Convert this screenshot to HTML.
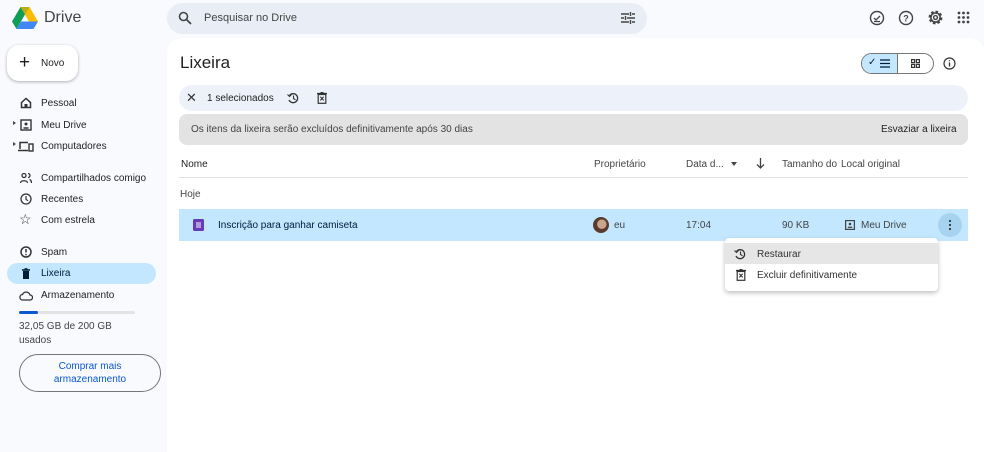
<!DOCTYPE html>
<html><head><meta charset="utf-8"><style>
*{box-sizing:border-box;margin:0;padding:0}
body{width:984px;height:452px;background:#f8fafd;font-family:"Liberation Sans",sans-serif;color:#1f1f1f;position:relative;overflow:hidden;font-size:10px}
.a{position:absolute}
.nav{position:absolute;left:41px;font-size:10px;color:#1f1f1f}
.ic{position:absolute;left:20px;width:12px;height:12px}
</style></head><body>
<!-- logo -->
<svg class="a" style="left:12px;top:7px" width="26" height="22" viewBox="0 0 26 22">
<path d="M8.5 0h9l8.5 14.5h-9z" fill="#fbbc04"/>
<path d="M8.5 0L0 14.5l4.5 7.5 8.5-14.5z" fill="#0f9d58"/>
<path d="M4.5 22h17l4.5-7.5H9z" fill="#4285f4"/>
<path d="M8.5 0l4.5 7.5L17.5 0z" fill="#1e8e3e" opacity=".3"/>
</svg>
<div class="a" style="left:44px;top:9px;font-size:16px;color:#444">Drive</div>
<!-- search -->
<div class="a" style="left:167px;top:3px;width:480px;height:31px;border-radius:16px;background:#e9eef6"></div>
<svg class="a" style="left:178px;top:11px" width="14" height="14" viewBox="0 0 14 14"><circle cx="5.5" cy="5.5" r="4" fill="none" stroke="#444" stroke-width="1.6"/><path d="M8.5 8.5L13 13" stroke="#444" stroke-width="1.8"/></svg>
<div class="a" style="left:204px;top:12px;font-size:11px;color:#444">Pesquisar no Drive</div>
<svg class="a" style="left:621px;top:12px" width="14" height="12" viewBox="0 0 14 12"><path d="M0 2h8M11 2h3M0 6h3M6 6h8M0 10h8M11 10h3M9.5 0v4M4.5 4v4M9.5 8v4" stroke="#444" stroke-width="1.4"/></svg>
<!-- top right icons -->
<svg class="a" style="left:869px;top:10px" width="16" height="16" viewBox="0 0 16 16"><circle cx="8" cy="8" r="6.5" fill="none" stroke="#444" stroke-width="1.4"/><path d="M5 8l2 2 4-4M5 11.5h6" stroke="#444" stroke-width="1.3" fill="none"/></svg>
<svg class="a" style="left:898px;top:10px" width="16" height="16" viewBox="0 0 16 16"><circle cx="8" cy="8" r="6.5" fill="none" stroke="#444" stroke-width="1.4"/><text x="8" y="11.5" font-size="9" text-anchor="middle" fill="#444" font-family="Liberation Sans" font-weight="bold">?</text></svg>
<svg class="a" style="left:927px;top:9px" width="17" height="17" viewBox="0 0 16 16"><circle cx="8" cy="8" r="5" fill="none" stroke="#444" stroke-width="3" stroke-dasharray="2.2 1.7"/><circle cx="8" cy="8" r="4.4" fill="none" stroke="#444" stroke-width="1.4"/><circle cx="8" cy="8" r="1.8" fill="none" stroke="#444" stroke-width="1.3"/></svg>
<svg class="a" style="left:957px;top:11px" width="13" height="13" viewBox="0 0 13 13" fill="#444"><circle cx="2" cy="2" r="1.4"/><circle cx="6.5" cy="2" r="1.4"/><circle cx="11" cy="2" r="1.4"/><circle cx="2" cy="6.5" r="1.4"/><circle cx="6.5" cy="6.5" r="1.4"/><circle cx="11" cy="6.5" r="1.4"/><circle cx="2" cy="11" r="1.4"/><circle cx="6.5" cy="11" r="1.4"/><circle cx="11" cy="11" r="1.4"/></svg>
<!-- Novo -->
<div class="a" style="left:7px;top:45px;width:71px;height:36px;background:#fff;border-radius:12px;box-shadow:0 1px 3px rgba(0,0,0,.3)"></div>
<div class="a" style="left:19px;top:53px;font-size:19px;font-weight:300;color:#1f1f1f;line-height:19px">+</div>
<div class="a" style="left:41px;top:58px;font-size:10px">Novo</div>
<!-- nav -->
<svg class="ic" style="top:97px" viewBox="0 0 12 12"><path d="M1.5 5.5L6 1.5l4.5 4v5h-9z" fill="none" stroke="#333" stroke-width="1.5"/><rect x="4.5" y="7" width="3" height="3.5" fill="#333"/></svg>
<div class="nav" style="top:98px">Pessoal</div>
<div class="a" style="left:13px;top:121px;border-left:3px solid #444;border-top:2.5px solid transparent;border-bottom:2.5px solid transparent"></div>
<svg class="ic" style="top:119px" viewBox="0 0 12 12"><rect x="1" y="1" width="10" height="10" fill="none" stroke="#333" stroke-width="1.4"/><circle cx="6" cy="5" r="1.5" fill="#333"/><path d="M3.5 9h5" stroke="#333" stroke-width="1.5"/></svg>
<div class="nav" style="top:120px">Meu Drive</div>
<div class="a" style="left:13px;top:142px;border-left:3px solid #444;border-top:2.5px solid transparent;border-bottom:2.5px solid transparent"></div>
<svg class="a" style="left:18px;top:141px" width="16" height="11" viewBox="0 0 16 11"><path d="M2 8V1.5h8M0 9.5h10" stroke="#333" stroke-width="1.5" fill="none"/><rect x="11" y="3" width="4" height="7" fill="none" stroke="#333" stroke-width="1.4"/></svg>
<div class="nav" style="top:141px">Computadores</div>
<svg class="ic" style="top:172px" viewBox="0 0 12 12"><circle cx="4" cy="3.5" r="2" fill="none" stroke="#333" stroke-width="1.3"/><path d="M0.5 11c0-3 7-3 7 0" fill="none" stroke="#333" stroke-width="1.3"/><path d="M8 1.5a2 2 0 010 4M9.5 7.5c1.5.5 2 1.5 2 3.5" fill="none" stroke="#333" stroke-width="1.3"/></svg>
<div class="nav" style="top:173px">Compartilhados comigo</div>
<svg class="ic" style="top:193px" viewBox="0 0 12 12"><circle cx="6" cy="6" r="5" fill="none" stroke="#333" stroke-width="1.3"/><path d="M6 3v3.3l2 1.5" fill="none" stroke="#333" stroke-width="1.2"/></svg>
<div class="nav" style="top:194px">Recentes</div>
<div class="a" style="left:19px;top:211px;font-size:14px;color:#333">☆</div>
<div class="nav" style="top:215px">Com estrela</div>
<svg class="ic" style="top:246px" viewBox="0 0 12 12"><circle cx="6" cy="6" r="5" fill="none" stroke="#333" stroke-width="1.5"/><path d="M6 3v3.5M6 8v1.3" stroke="#333" stroke-width="1.5"/></svg>
<div class="nav" style="top:247px">Spam</div>
<div class="a" style="left:7px;top:263px;width:149px;height:21px;border-radius:11px;background:#c2e7ff"></div>
<svg class="ic" style="top:268px" viewBox="0 0 12 12"><path d="M2 2h8M4.5 1h3" stroke="#001d35" stroke-width="1.4"/><path d="M3 3h6v8H3z" fill="#001d35"/></svg>
<div class="nav" style="top:268px;color:#001d35">Lixeira</div>
<svg class="a" style="left:18px;top:291px" width="15" height="10" viewBox="0 0 15 10"><path d="M4 9h8a2.5 2.5 0 000-5 4 4 0 00-7.5-.5A2.8 2.8 0 004 9z" fill="none" stroke="#333" stroke-width="1.3"/></svg>
<div class="nav" style="top:290px">Armazenamento</div>
<div class="a" style="left:19px;top:311px;width:116px;height:3px;background:#e3e3e3;border-radius:2px"></div>
<div class="a" style="left:19px;top:311px;width:19px;height:3px;background:#0b57d0;border-radius:2px"></div>
<div class="a" style="left:19px;top:320px;font-size:10px;color:#444;line-height:14px">32,05 GB de 200 GB<br>usados</div>
<div class="a" style="left:19px;top:354px;width:142px;height:38px;border:1px solid #747775;border-radius:19px;color:#0b57d0;text-align:center;font-size:10px;line-height:13px;padding-top:5px">Comprar mais<br>armazenamento</div>
<!-- main -->
<div class="a" style="left:167px;top:38px;width:817px;height:414px;background:#fff;border-radius:14px 14px 0 0"></div>
<div class="a" style="left:180px;top:53px;font-size:17px;color:#1f1f1f">Lixeira</div>
<div class="a" style="left:861px;top:53px;width:73px;height:21px;border:1px solid #747775;border-radius:11px;overflow:hidden">
 <div style="position:absolute;left:0;top:0;width:36px;height:19px;background:#c2e7ff;border-right:1px solid #747775"></div>
</div>
<div class="a" style="left:868px;top:57px;font-size:10px;color:#001d35">✓</div>
<svg class="a" style="left:880px;top:59px" width="10" height="9" viewBox="0 0 10 9"><path d="M0 1h10M0 4.5h10M0 8h10" stroke="#001d35" stroke-width="1.3"/></svg>
<svg class="a" style="left:911px;top:59px" width="9" height="9" viewBox="0 0 9 9" fill="none" stroke="#333" stroke-width="1.2"><rect x=".6" y=".6" width="3" height="3"/><rect x="5.4" y=".6" width="3" height="3"/><rect x=".6" y="5.4" width="3" height="3"/><rect x="5.4" y="5.4" width="3" height="3"/></svg>
<svg class="a" style="left:943px;top:57px" width="13" height="13" viewBox="0 0 13 13"><circle cx="6.5" cy="6.5" r="5.5" fill="none" stroke="#333" stroke-width="1.2"/><path d="M6.5 5.5v4M6.5 3.3v1" stroke="#333" stroke-width="1.3"/></svg>
<!-- selection bar -->
<div class="a" style="left:179px;top:85px;width:789px;height:26px;border-radius:13px;background:#edf2fa"></div>
<div class="a" style="left:186px;top:90px;font-size:13px;color:#333">✕</div>
<div class="a" style="left:207px;top:93px;font-size:10px">1 selecionados</div>
<svg class="a" style="left:287px;top:92px" width="12" height="12" viewBox="0 0 12 12"><path d="M2.5 3.5A4.5 4.5 0 112 8" fill="none" stroke="#333" stroke-width="1.3"/><path d="M0.5 2.5l2 2 2-2" fill="none" stroke="#333" stroke-width="1.1"/><path d="M6.5 3.5v3l2 1.3" fill="none" stroke="#333" stroke-width="1.1"/></svg>
<svg class="a" style="left:317px;top:92px" width="10" height="12" viewBox="0 0 10 12"><path d="M0 1.5h10M3.5.5h3" stroke="#333" stroke-width="1.2"/><rect x="1.2" y="2.5" width="7.6" height="8.8" fill="none" stroke="#333" stroke-width="1.2"/><path d="M3.3 4.8l3.4 3.6M6.7 4.8L3.3 8.4" stroke="#333" stroke-width="1.1"/></svg>
<!-- notice -->
<div class="a" style="left:179px;top:114px;width:789px;height:31px;border-radius:8px;background:#e3e3e3"></div>
<div class="a" style="left:191px;top:124px;font-size:10px;color:#444">Os itens da lixeira serão excluídos definitivamente após 30 dias</div>
<div class="a" style="left:881px;top:124px;font-size:10px;color:#1f1f1f">Esvaziar a lixeira</div>
<!-- header -->
<div class="a" style="left:181px;top:159px;font-size:10px">Nome</div>
<div class="a" style="left:594px;top:159px;font-size:10px;color:#444">Proprietário</div>
<div class="a" style="left:686px;top:159px;font-size:10px;color:#444">Data d...</div>
<div class="a" style="left:731px;top:162px;border-top:4px solid #444;border-left:3.5px solid transparent;border-right:3.5px solid transparent"></div>
<svg class="a" style="left:756px;top:158px" width="9" height="11" viewBox="0 0 9 11"><path d="M4.5 0v10M1 6.5l3.5 3.5 3.5-3.5" fill="none" stroke="#444" stroke-width="1.3"/></svg>
<div class="a" style="left:782px;top:159px;font-size:10px;color:#444">Tamanho do</div>
<div class="a" style="left:841px;top:159px;font-size:10px;color:#444">Local original</div>
<div class="a" style="left:179px;top:177px;width:789px;height:1px;background:#e0e0e0"></div>
<div class="a" style="left:180px;top:189px;font-size:10px;color:#444">Hoje</div>
<!-- row -->
<div class="a" style="left:179px;top:209px;width:789px;height:32px;background:#c2e7ff"></div>
<svg class="a" style="left:193px;top:219px" width="11" height="12" viewBox="0 0 11 12"><rect width="11" height="12" rx="1.5" fill="#673ab7"/><path d="M3 4h5M3 6h5M3 8h5" stroke="#fff" stroke-width=".9"/></svg>
<div class="a" style="left:218px;top:220px;font-size:10px;color:#001d35">Inscrição para ganhar camiseta</div>
<div class="a" style="left:593px;top:217px;width:16px;height:16px;border-radius:50%;background:radial-gradient(circle at 55% 45%,#c9a58c 0 35%,#5a3a2c 40%)"></div>
<div class="a" style="left:614px;top:220px;font-size:10px;color:#444">eu</div>
<div class="a" style="left:686px;top:220px;font-size:10px;color:#444">17:04</div>
<div class="a" style="left:782px;top:220px;font-size:10px;color:#444">90 KB</div>
<svg class="a" style="left:845px;top:220px" width="10" height="10" viewBox="0 0 10 10"><rect x=".6" y=".6" width="8.8" height="8.8" fill="none" stroke="#444" stroke-width="1.2"/><circle cx="5" cy="4" r="1.3" fill="#444"/><path d="M2.8 7.3h4.4" stroke="#444" stroke-width="1.3"/></svg>
<div class="a" style="left:861px;top:220px;font-size:10px;color:#444">Meu Drive</div>
<div class="a" style="left:938px;top:213px;width:24px;height:24px;border-radius:50%;background:#a8d3f0"></div>
<svg class="a" style="left:948px;top:219px" width="4" height="12" viewBox="0 0 4 12" fill="#333"><circle cx="2" cy="2" r="1.1"/><circle cx="2" cy="6" r="1.1"/><circle cx="2" cy="10" r="1.1"/></svg>
<!-- menu -->
<div class="a" style="left:725px;top:238px;width:213px;height:53px;background:#fff;border-radius:4px;box-shadow:0 2px 5px rgba(0,0,0,.25)"></div>
<div class="a" style="left:725px;top:243px;width:213px;height:21px;background:#e6e6e6"></div>
<svg class="a" style="left:734px;top:248px" width="12" height="12" viewBox="0 0 12 12"><path d="M2.5 3.5A4.5 4.5 0 112 8" fill="none" stroke="#333" stroke-width="1.3"/><path d="M0.5 2.5l2 2 2-2" fill="none" stroke="#333" stroke-width="1.1"/><path d="M6.5 3.5v3l2 1.3" fill="none" stroke="#333" stroke-width="1.1"/></svg>
<div class="a" style="left:757px;top:249px;font-size:10px;color:#333">Restaurar</div>
<svg class="a" style="left:736px;top:269px" width="10" height="12" viewBox="0 0 10 12"><path d="M0 1.5h10M3.5.5h3" stroke="#333" stroke-width="1.2"/><rect x="1.2" y="2.5" width="7.6" height="8.8" fill="none" stroke="#333" stroke-width="1.2"/><path d="M3.3 4.8l3.4 3.6M6.7 4.8L3.3 8.4" stroke="#333" stroke-width="1.1"/></svg>
<div class="a" style="left:757px;top:270px;font-size:10px;color:#333">Excluir definitivamente</div>
</body></html>
